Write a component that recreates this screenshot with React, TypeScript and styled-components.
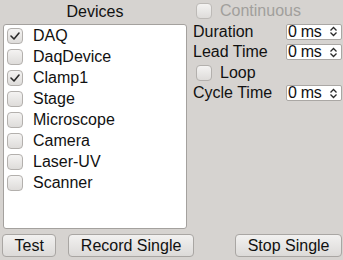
import React from "react";
import styled, { createGlobalStyle } from "styled-components";

const GlobalStyle = createGlobalStyle`
  html, body { margin: 0; padding: 0; }
  body {
    background: #d6d3d0;
    font-family: "Liberation Sans", Arial, sans-serif;
    font-size: 16px;
    color: #111111;
  }
`;

const Window = styled.div`
  width: 343px;
  height: 260px;
  box-sizing: border-box;
  background: #d6d3d0;
  display: grid;
  grid-template-rows: 1fr auto;
  padding: 0 1px 3px 2px;
`;

const Top = styled.div`
  display: flex;
  min-height: 0;
`;

const LeftCol = styled.div`
  width: 184px;
  margin-left: 1px;
  display: flex;
  flex-direction: column;
`;

const Title = styled.div`
  height: 24px;
  line-height: 24px;
  text-align: center;
`;

const ListBox = styled.div`
  height: 205px;
  box-sizing: border-box;
  background: #ffffff;
  border: 1px solid #a4a19e;
  border-radius: 3px;
  display: flex;
  flex-direction: column;
`;

const Row = styled.label`
  height: 21px;
  display: flex;
  align-items: center;
  gap: 10px;
  padding-left: 3px;
  line-height: 1;
`;

const Box = styled.span<{ $dim?: boolean }>`
  width: 16px;
  height: 16px;
  box-sizing: border-box;
  border: 1px solid ${(p) => (p.$dim ? "#bdbab7" : "#b3b0ad")};
  border-radius: 4px;
  background: linear-gradient(#f4f3f2, #dedcda);
  display: flex;
  align-items: center;
  justify-content: center;
  flex: none;
`;

const Check = ({ checked, dim }: { checked?: boolean; dim?: boolean }) => (
  <Box $dim={dim}>
    {checked && (
      <svg width="12" height="10" viewBox="0 0 12 10">
        <path d="M2 5 L5 8 L10 2" fill="none" stroke="#2a2a2a" strokeWidth="1.6" strokeLinecap="round" strokeLinejoin="round" />
      </svg>
    )}
  </Box>
);

const RightCol = styled.div`
  flex: 1;
  margin-left: 6px;
  padding-top: 1px;
  display: flex;
  flex-direction: column;
`;

const FormRow = styled.div`
  height: 20.5px;
  display: flex;
  align-items: center;
  justify-content: space-between;
  line-height: 1;
`;

const CheckRow = styled.label<{ $disabled?: boolean }>`
  height: 20.5px;
  display: flex;
  align-items: center;
  gap: 8px;
  padding-left: 3px;
  line-height: 1;
  color: ${(p) => (p.$disabled ? "#a19f9c" : "#111111")};
`;

const Spin = styled.div`
  width: 56px;
  height: 16px;
  box-sizing: border-box;
  background: #ffffff;
  border: 1px solid #aaa7a4;
  border-radius: 2px;
  display: flex;
  align-items: center;
  justify-content: space-between;
  padding: 0 3px 0 1px;
  font-size: 16px;
  letter-spacing: -0.3px;
`;

const SpinBox = ({ value }: { value: string }) => (
  <Spin>
    <span>{value}</span>
    <svg width="9" height="11" viewBox="0 0 9 11">
      <path d="M1.5 4.5 L4.5 1.5 L7.5 4.5 M1.5 6.5 L4.5 9.5 L7.5 6.5" fill="none" stroke="#2a2a2a" strokeWidth="1.3" />
    </svg>
  </Spin>
);

const Bottom = styled.div`
  display: flex;
  align-items: center;
  gap: 12px;
  height: 23px;
`;

const Button = styled.button<{ $push?: boolean }>`
  height: 23px;
  box-sizing: border-box;
  padding: 0 11.5px;
  border: 1px solid #a9a6a3;
  border-radius: 4px;
  background: linear-gradient(#f2f1f0, #dcdad8);
  font-family: "Liberation Sans", Arial, sans-serif;
  font-size: 16px;
  color: #111111;
  margin-left: ${(p) => (p.$push ? "auto" : "0")};
`;

const devices = [
  { name: "DAQ", on: true },
  { name: "DaqDevice", on: false },
  { name: "Clamp1", on: true },
  { name: "Stage", on: false },
  { name: "Microscope", on: false },
  { name: "Camera", on: false },
  { name: "Laser-UV", on: false },
  { name: "Scanner", on: false },
];

export default function App() {
  return (
    <>
      <GlobalStyle />
      <Window>
        <Top>
          <LeftCol>
            <Title>Devices</Title>
            <ListBox>
              {devices.map((d) => (
                <Row key={d.name}>
                  <Check checked={d.on} />
                  <span>{d.name}</span>
                </Row>
              ))}
            </ListBox>
          </LeftCol>
          <RightCol>
            <CheckRow $disabled>
              <Check dim />
              <span>Continuous</span>
            </CheckRow>
            <FormRow>
              <span>Duration</span>
              <SpinBox value="0 ms" />
            </FormRow>
            <FormRow>
              <span>Lead Time</span>
              <SpinBox value="0 ms" />
            </FormRow>
            <CheckRow>
              <Check />
              <span>Loop</span>
            </CheckRow>
            <FormRow>
              <span>Cycle Time</span>
              <SpinBox value="0 ms" />
            </FormRow>
          </RightCol>
        </Top>
        <Bottom>
          <Button>Test</Button>
          <Button>Record Single</Button>
          <Button $push>Stop Single</Button>
        </Bottom>
      </Window>
    </>
  );
}
